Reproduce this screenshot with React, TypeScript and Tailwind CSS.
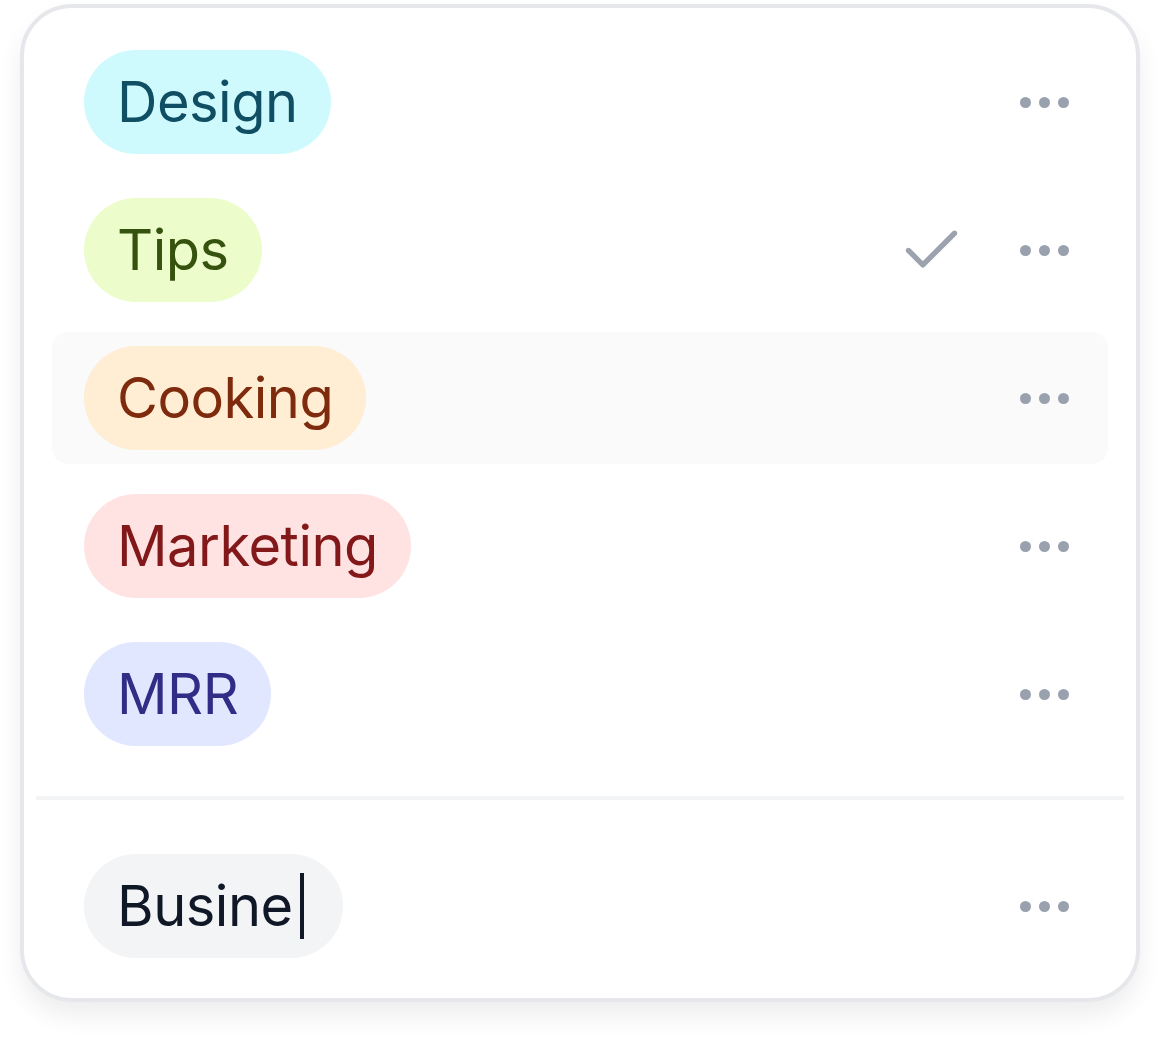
import React from 'react';

type Tag = { name: string; bg: string; text: string; active?: boolean; checked?: boolean };

const tags: Tag[] = [
  { name: 'Design', bg: 'bg-cyan-100', text: 'text-cyan-900' },
  { name: 'Tips', bg: 'bg-lime-100', text: 'text-lime-900', checked: true },
  { name: 'Cooking', bg: 'bg-orange-100', text: 'text-orange-900', active: true },
  { name: 'Marketing', bg: 'bg-red-100', text: 'text-red-900' },
  { name: 'MRR', bg: 'bg-indigo-100', text: 'text-indigo-900' },
];

const Dots: React.FC = () => (
  <div className="flex items-center gap-[8px]">
    <span className="w-[11px] h-[11px] rounded-full bg-gray-400" />
    <span className="w-[11px] h-[11px] rounded-full bg-gray-400" />
    <span className="w-[11px] h-[11px] rounded-full bg-gray-400" />
  </div>
);

const CheckIcon: React.FC = () => (
  <svg width="69" height="69" viewBox="0 0 24 24" fill="none" stroke="#9ca3af" strokeWidth="1.85" strokeLinecap="round" strokeLinejoin="round">
    <path d="M20 6 9 17l-5-5" />
  </svg>
);

const App: React.FC = () => {
  return (
    <div className="w-[1160px] h-[1040px] bg-white pt-[4px] px-[20px]" style={{ fontFamily: 'Inter, "Noto Sans", sans-serif' }}>
      <div className="h-[998px] rounded-[52px] border-4 border-gray-200 bg-white p-7 shadow-[0_14px_24px_rgba(0,0,0,0.07)]">
        {/* Tag list */}
        <div className="flex flex-col gap-4">
          {tags.map(tag => (
            <div
              key={tag.name}
              className={`h-[132px] flex items-center justify-between rounded-[16px] pl-8 pr-[39px] ${tag.active ? 'bg-[#fafafa]' : ''}`}
            >
              <span className={`h-[104px] flex items-center rounded-full px-[33px] text-[56px] leading-[80px] tracking-[-0.5px] ${tag.bg} ${tag.text}`}>
                {tag.name}
              </span>
              <div className="flex items-center">
                {tag.checked && (
                  <div className="mr-[54px] flex items-center">
                    <CheckIcon />
                  </div>
                )}
                <Dots />
              </div>
            </div>
          ))}
        </div>

        <div className="-mx-4 mt-[36px] mb-[40px] h-[4px] bg-gray-100" />

        {/* New tag input */}
        <div className="h-[132px] flex items-center justify-between pl-8 pr-[39px]">
          <span className="h-[104px] flex items-center rounded-full pl-[33px] pr-[39px] text-[56px] leading-[80px] tracking-[-0.5px] bg-gray-100 text-gray-900">
            Busine
            <span className="ml-[7px] w-[4px] h-[66px] bg-gray-900" />
          </span>
          <Dots />
        </div>
      </div>
    </div>
  );
};

export default App;
